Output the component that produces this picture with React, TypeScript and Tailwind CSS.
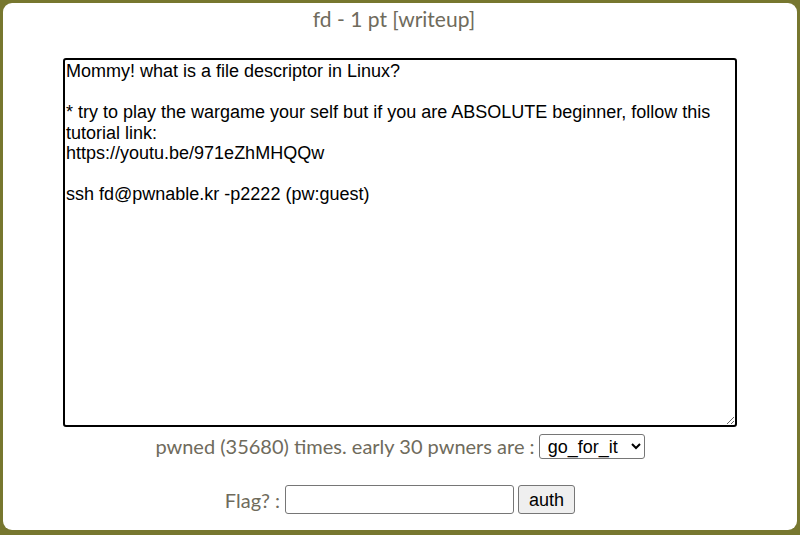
import React from "react";

export default function App() {
  const text =
    "Mommy! what is a file descriptor in Linux?\n\n* try to play the wargame your self but if you are ABSOLUTE beginner, follow this tutorial link:\nhttps://youtu.be/971eZhMHQQw\n\nssh fd@pwnable.kr -p2222 (pw:guest)";
  return (
    <div className="w-[800px] h-[535px] bg-[#77772f] pt-[3px] px-[3px] pb-[5px]">
      <div className="h-full bg-white rounded-[9px] flex flex-col items-center text-[#6f6b5c]" style={{ fontFamily: "Lato, 'Open Sans', sans-serif" }}>
        <div className="mt-[3px] h-[25px] pr-[12px] text-[21px] leading-[25px]">fd - 1 pt [writeup]</div>
        <textarea
          readOnly
          defaultValue={text}
          className="mt-[27px] w-[674px] h-[369px] border-2 border-black rounded-[3px] px-[1px] py-[1px] text-[18px] leading-[20.5px] text-black outline-none"
          style={{ fontFamily: "'Liberation Sans', Arial, sans-serif", resize: "both" }}
        />
        <div className="mt-[7px] flex items-center gap-[4px] text-[20px] leading-[24px]">
          <span className="-mt-[2px]">pwned (35680) times. early 30 pwners are :</span>
          <select
            className="h-[25px] w-[106px] border border-[#767676] rounded-[3px] bg-white text-black text-[18px] pl-[4px]"
            style={{ fontFamily: "'Liberation Sans', Arial, sans-serif", appearance: "auto" }}
            defaultValue="go_for_it"
          >
            <option>go_for_it</option>
          </select>
        </div>
        <div className="mt-[26px] flex items-center gap-[4px] text-[20px] leading-[24px]">
          <span className="mr-[1px]">Flag? :</span>
          <input
            type="text"
            className="h-[29px] w-[229px] border border-[#767676] rounded-[3px] bg-white outline-none"
          />
          <button
            className="h-[29px] w-[57px] border border-[#767676] rounded-[3px] bg-[#efefef] text-black text-[18px]"
            style={{ fontFamily: "'Liberation Sans', Arial, sans-serif" }}
          >
            auth
          </button>
        </div>
      </div>
    </div>
  );
}
